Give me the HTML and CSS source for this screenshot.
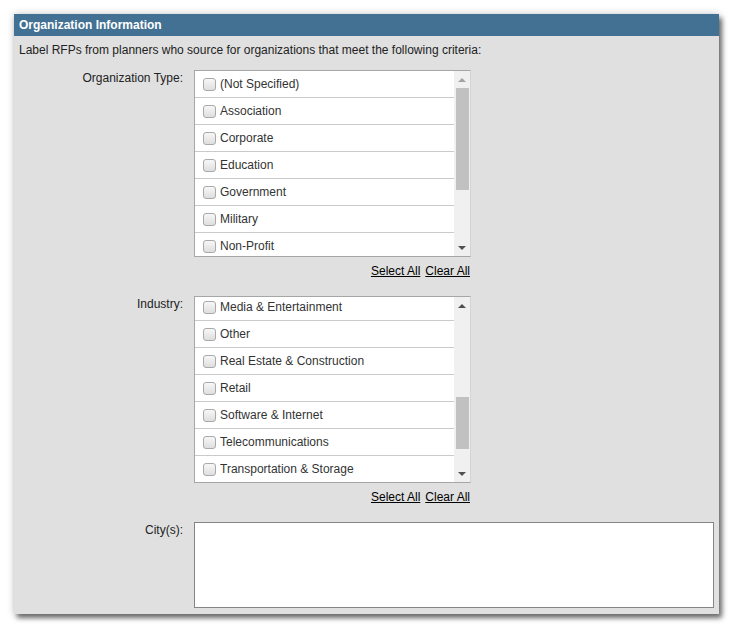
FILE: index.html
```html
<!DOCTYPE html>
<html lang="en">
  <head>
    <meta charset="UTF-8" />
    <meta name="viewport" content="width=device-width, initial-scale=1.0" />
    <title>Organization Information</title>
    <link rel="stylesheet" href="styles.css">
  </head>
  <body>
    <div class="page">
      <div class="panel">
        <div class="panel-title">Organization Information</div>
        <p class="intro">Label RFPs from planners who source for organizations that meet the following criteria:</p>

        <div class="fields">
          <div class="field">
            <label class="field-label">Organization Type:</label>
            <div class="field-input">
              <div class="listbox">
                <ul class="options">
                  <li class="option"><input type="checkbox" /><span>(Not Specified)</span></li>
                  <li class="option"><input type="checkbox" /><span>Association</span></li>
                  <li class="option"><input type="checkbox" /><span>Corporate</span></li>
                  <li class="option"><input type="checkbox" /><span>Education</span></li>
                  <li class="option"><input type="checkbox" /><span>Government</span></li>
                  <li class="option"><input type="checkbox" /><span>Military</span></li>
                  <li class="option"><input type="checkbox" /><span>Non-Profit</span></li>
                </ul>
                <div class="scrollbar">
                  <span class="arrow up disabled"></span>
                  <div class="track"><div class="thumb" style="top: 0; height: 102px"></div></div>
                  <span class="arrow down"></span>
                </div>
              </div>
              <div class="list-actions"><a href="#">Select All</a><a href="#">Clear All</a></div>
            </div>
          </div>

          <div class="field">
            <label class="field-label">Industry:</label>
            <div class="field-input">
              <div class="listbox">
                <!-- scrolled part way down, first row sits slightly above the edge -->
                <ul class="options scrolled">
                  <li class="option"><input type="checkbox" /><span>Media &amp; Entertainment</span></li>
                  <li class="option"><input type="checkbox" /><span>Other</span></li>
                  <li class="option"><input type="checkbox" /><span>Real Estate &amp; Construction</span></li>
                  <li class="option"><input type="checkbox" /><span>Retail</span></li>
                  <li class="option"><input type="checkbox" /><span>Software &amp; Internet</span></li>
                  <li class="option"><input type="checkbox" /><span>Telecommunications</span></li>
                  <li class="option"><input type="checkbox" /><span>Transportation &amp; Storage</span></li>
                </ul>
                <div class="scrollbar">
                  <span class="arrow up"></span>
                  <div class="track"><div class="thumb" style="top: 83px; height: 52px"></div></div>
                  <span class="arrow down"></span>
                </div>
              </div>
              <div class="list-actions"><a href="#">Select All</a><a href="#">Clear All</a></div>
            </div>
          </div>

          <div class="field">
            <label class="field-label">City(s):</label>
            <div class="field-input">
              <textarea class="cities"></textarea>
            </div>
          </div>
        </div>
      </div>
    </div>
  </body>
</html>
```

FILE: styles.css
```css
body {
  margin: 0;
  background-color: #ffffff;
  font-family: "Liberation Sans", Arial, sans-serif;
  font-size: 12px;
  color: #222222;
}
.page {
  padding: 14px;
}
.panel {
  width: 705px;
  padding-bottom: 6px;
  background-color: #e0e0e0;
  box-shadow: 3px 4px 5px rgba(0, 0, 0, 0.55), 0 0 8px rgba(0, 0, 0, 0.2);
}
.panel-title {
  height: 22px;
  line-height: 22px;
  padding: 0 5px;
  background-color: #437194;
  color: #ffffff;
  font-weight: bold;
}
.intro {
  margin: 7px 5px 0;
  line-height: 14px;
}
.fields {
  display: flex;
  flex-direction: column;
  gap: 18px;
  margin-top: 13px;
}
.field {
  display: grid;
  grid-template-columns: 169px 1fr;
  column-gap: 11px;
}
.field-label {
  text-align: right;
  padding-top: 1px;
  line-height: 14px;
}
.listbox {
  display: flex;
  box-sizing: border-box;
  width: 277px;
  height: 187px;
  background-color: #ffffff;
  border: 1px solid #a6a6a6;
  border-right-color: #d4d4d4;
}
.options {
  flex: 1;
  margin: 0;
  padding: 0;
  list-style: none;
  overflow: hidden;
}
.options.scrolled .option:first-child {
  margin-top: -3px;
}
.option {
  display: flex;
  align-items: center;
  gap: 4px;
  height: 26px;
  padding-left: 8px;
  border-bottom: 1px solid #cacaca;
  color: #333333;
}
.option input {
  appearance: none;
  -webkit-appearance: none;
  box-sizing: border-box;
  width: 13px;
  height: 13px;
  margin: 0;
  border: 1px solid #a9a9a9;
  border-radius: 3px;
  background: linear-gradient(#f7f7f7, #dedede);
}
.scrollbar {
  display: flex;
  flex-direction: column;
  width: 16px;
  background-color: #f0f0f0;
}
.track {
  position: relative;
  flex: 1;
}
.thumb {
  position: absolute;
  left: 2px;
  right: 1px;
  background-color: #c1c1c1;
}
.arrow {
  display: flex;
  justify-content: center;
  align-items: center;
  height: 17px;
}
.arrow::before {
  content: "";
  border-left: 4px solid transparent;
  border-right: 4px solid transparent;
}
.arrow.up::before {
  border-bottom: 4px solid #505050;
}
.arrow.down::before {
  border-top: 4px solid #505050;
}
.arrow.up.disabled::before {
  border-bottom-color: #a3a3a3;
}
.list-actions {
  display: flex;
  justify-content: flex-end;
  gap: 5px;
  width: 276px;
  margin-top: 7px;
  line-height: 14px;
}
.list-actions a {
  color: #000000;
  text-decoration: underline;
}
.cities {
  display: block;
  box-sizing: border-box;
  width: 520px;
  height: 86px;
  margin: 0;
  border: 1px solid #858585;
  resize: none;
}
```
